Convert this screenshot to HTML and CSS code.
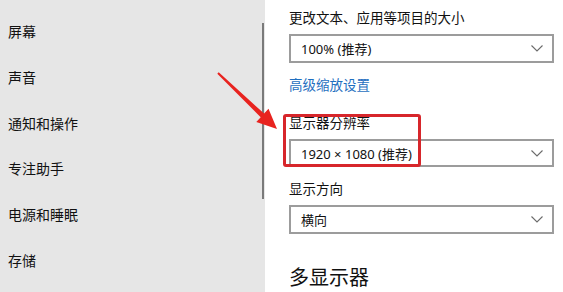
FILE: index.html
```html
<!DOCTYPE html>
<html lang="zh-CN">
<head>
<meta charset="utf-8">
<title>显示设置</title>
<link rel="stylesheet" href="styles.css">
</head>
<body>
<div class="window">
  <nav class="sidebar">
    <ul class="nav-list">
      <li>屏幕</li>
      <li>声音</li>
      <li>通知和操作</li>
      <li>专注助手</li>
      <li>电源和睡眠</li>
      <li>存储</li>
    </ul>
    <div class="scroll-thumb"></div>
  </nav>
  <main class="content">
    <div class="label">更改文本、应用等项目的大小</div>
    <div class="select">
      <span>100% (推荐)</span>
      <svg class="chev" viewBox="0 0 12 7" width="12" height="7"><path d="M0.5 0.5 L6 6 L11.5 0.5" fill="none" stroke="#6b6b6b" stroke-width="1.1"/></svg>
    </div>
    <a class="link">高级缩放设置</a>
    <div class="label label-gap">显示器分辨率</div>
    <div class="select">
      <span>1920 × 1080 (推荐)</span>
      <svg class="chev" viewBox="0 0 12 7" width="12" height="7"><path d="M0.5 0.5 L6 6 L11.5 0.5" fill="none" stroke="#6b6b6b" stroke-width="1.1"/></svg>
    </div>
    <div class="label label-gap2">显示方向</div>
    <div class="select">
      <span>横向</span>
      <svg class="chev" viewBox="0 0 12 7" width="12" height="7"><path d="M0.5 0.5 L6 6 L11.5 0.5" fill="none" stroke="#6b6b6b" stroke-width="1.1"/></svg>
    </div>
    <h2 class="heading">多显示器</h2>
    <div class="highlight"></div>
  </main>
  <svg class="arrow" viewBox="0 0 563 292" width="563" height="292">
    <polygon points="217.3,73.7 218.7,72.3 264.1,113.6 268.5,108.8 277,129 256.3,122 260.7,117.2" fill="#e8231f"/>
  </svg>
</div>
</body>
</html>
```
FILE: styles.css
```css
html, body {
  margin: 0;
  padding: 0;
  background: #ffffff;
}
body {
  font-family: "Noto Sans", "Noto Sans CJK SC", sans-serif;
  color: #000;
}
.window {
  position: relative;
  width: 563px;
  height: 292px;
  overflow: hidden;
  display: flex;
}
.sidebar {
  width: 265px;
  flex: none;
  background: #e6e6e6;
  display: flex;
}
.nav-list {
  list-style: none;
  margin: 0;
  padding: 9px 0 0 8px;
  flex: 1;
}
.nav-list li {
  height: 45.8px;
  line-height: 46px;
  font-size: 14px;
  color: #111;
}
.scroll-thumb {
  width: 2px;
  height: 176px;
  margin-top: 23px;
  margin-right: 1px;
  background: #7a7a7a;
}
.content {
  position: relative;
  flex: 1;
  padding: 8px 0 0 24px;
  display: flex;
  flex-direction: column;
  align-items: flex-start;
}
.label {
  font-size: 13.5px;
  line-height: 20px;
  height: 20px;
  margin-bottom: 6px;
  color: #111;
}
.label-gap { margin-top: 18px; }
.label-gap2 { margin-top: 12px; }
.select {
  box-sizing: border-box;
  width: 265px;
  height: 29px;
  border: 2px solid #9c9c9c;
  padding: 0 9px 0 10px;
  display: flex;
  align-items: center;
  justify-content: space-between;
  font-size: 13px;
  color: #111;
  background: #fff;
}
.chev { display: block; }
.link {
  margin-top: 12px;
  font-size: 13.5px;
  line-height: 20px;
  color: #1f6fc0;
}
.heading {
  margin: 30px 0 0 0;
  font-size: 20px;
  line-height: 28px;
  font-weight: normal;
  color: #111;
}
.highlight {
  position: absolute;
  left: 18px;
  top: 114px;
  width: 138px;
  height: 53px;
  box-sizing: border-box;
  border: 3px solid #d7262b;
  border-radius: 3px;
}
.arrow {
  position: absolute;
  left: 0;
  top: 0;
  pointer-events: none;
}
```
